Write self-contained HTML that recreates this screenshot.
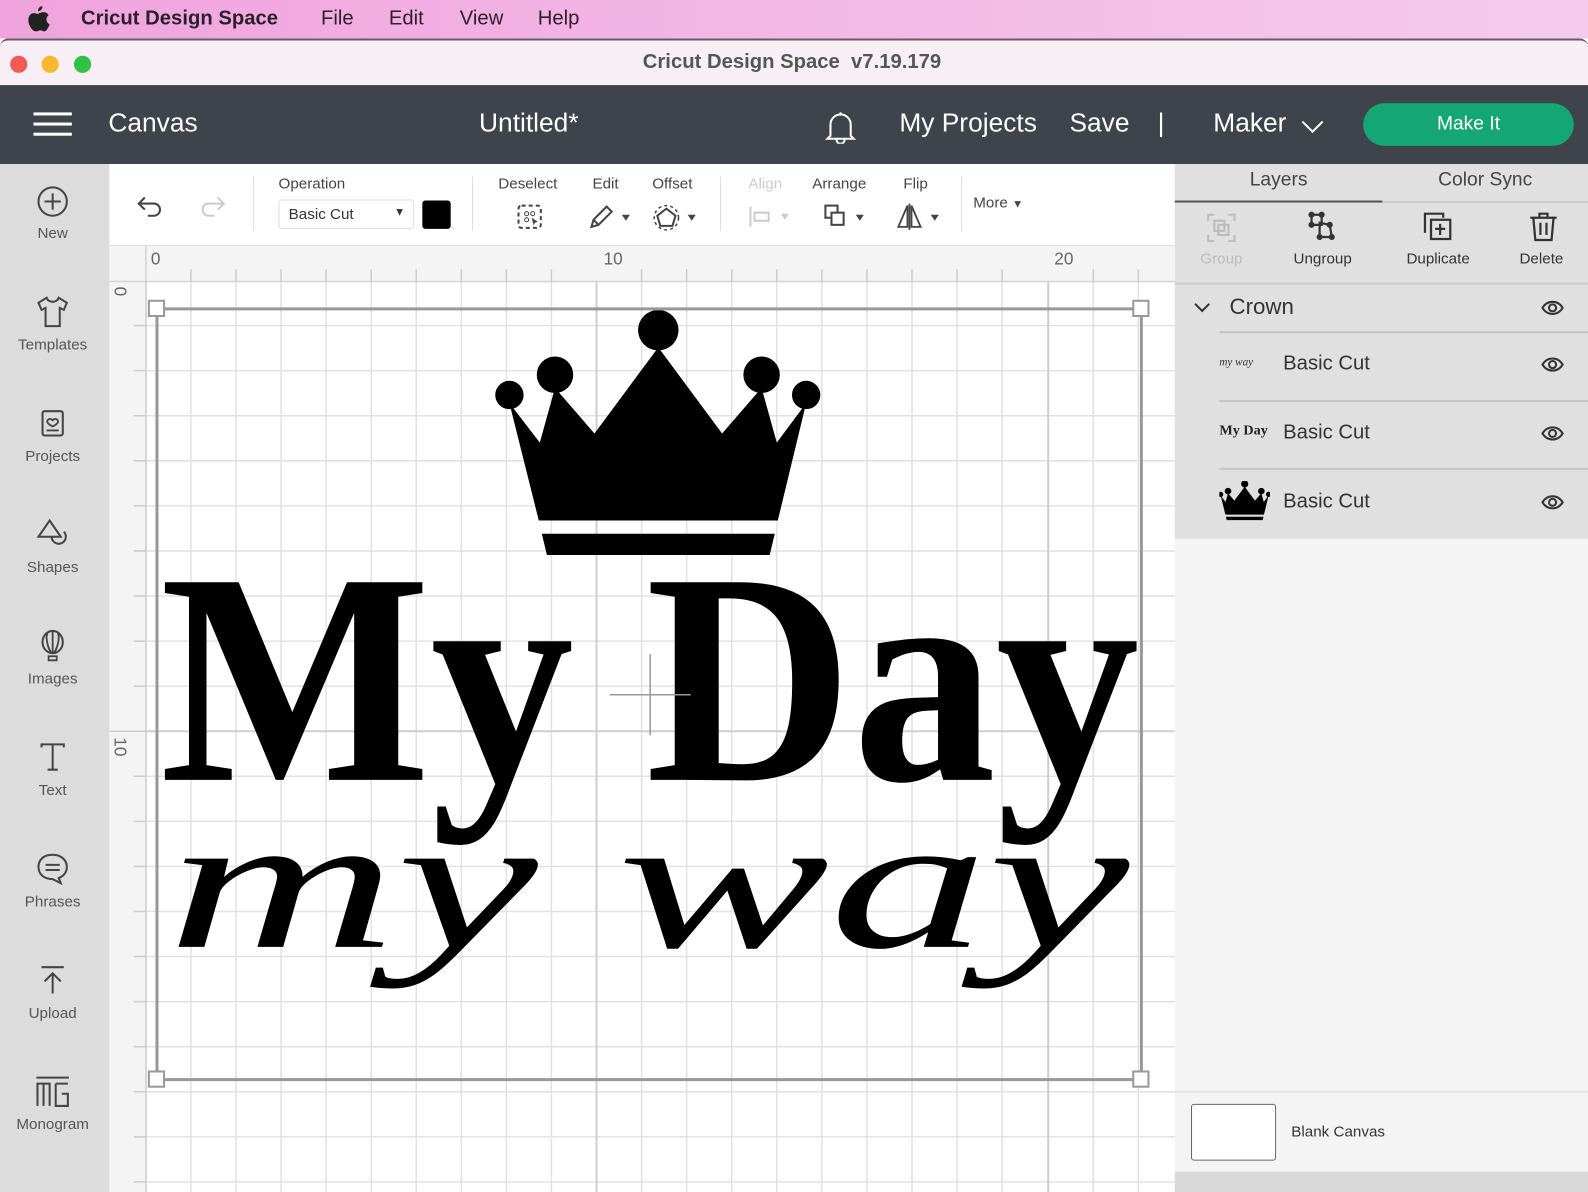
<!DOCTYPE html>
<html><head><meta charset="utf-8"><style>
*{margin:0;padding:0;box-sizing:border-box}
body{width:1588px;height:1177px;overflow:hidden;font-family:"Liberation Sans",sans-serif;background:#fff;position:relative}
#wrap{position:absolute;left:0;top:0;width:1568px;height:1163px;transform:scale(1.01276);transform-origin:0 0}
.abs{position:absolute}
.menubar{left:0;top:0;width:1568px;height:38px;background:linear-gradient(90deg,#f0a3dc,#f3b8e6 50%,#f4cbee);}
.menubar span{position:absolute;top:7px;font-size:20px;color:#2a1f2a}
.titlebar{left:0;top:38px;width:1568px;height:46px;background:#f8eef6;border-top:2px solid #6a5a68;border-radius:8px 8px 0 0}
.dot{position:absolute;top:15px;width:17px;height:17px;border-radius:50%}
.header{left:0;top:84px;width:1568px;height:78px;background:#3e434c;color:#fff}
.header span{position:absolute;font-size:26px;top:22px}
.sidebar{left:0;top:162px;width:108px;height:1015px;background:#dcdcdc}
.side{position:absolute;left:0;width:104px;text-align:center;font-size:15px;color:#555}
.side svg{display:block;margin:0 auto 6px}
.toolbar{left:108px;top:162px;width:1052px;height:80px;background:#fff}
.tl{position:absolute;font-size:15px;color:#444}
.panel{left:1160px;top:162px;width:408px;height:1015px;background:#f4f4f4}
.pl{position:absolute;font-size:15px;color:#333;text-align:center}
</style></head><body><div id="wrap">
<div class="abs menubar">
 <svg class="abs" style="left:27px;top:6px" width="22" height="26" viewBox="0 0 22 26"><path d="M15 0c0 3-2 5-4.5 5C10.5 2 12.5 0 15 0zM11 7c2 0 3-1 5-1 2 0 4 1 5 3-3 2-3 7 1 9-1 3-3 7-5 7-2 0-2-1-4-1s-3 1-4.5 1C5 25 1 19 1 14c0-5 3-7 5.5-7 2 0 3 1 4.5 1z" fill="#222"/></svg>
 <span style="left:80px;font-weight:bold">Cricut Design Space</span>
 <span style="left:317px">File</span><span style="left:384px">Edit</span><span style="left:454px">View</span><span style="left:531px">Help</span>
</div>
<div class="abs titlebar">
 <div class="dot" style="left:10px;background:#f25a55"></div>
 <div class="dot" style="left:41px;background:#f6b82e"></div>
 <div class="dot" style="left:73px;background:#2fc244"></div>
 <div class="abs" style="left:0;width:1564px;top:10px;text-align:center;font-size:20px;font-weight:bold;color:#555">Cricut Design Space&nbsp; v7.19.179</div>
</div>
<div class="abs header">
 <svg class="abs" style="left:33px;top:26px" width="38" height="26"><rect y="1" width="38" height="3" fill="#fff"/><rect y="11" width="38" height="3" fill="#fff"/><rect y="21" width="38" height="3" fill="#fff"/></svg>
 <span style="left:107px">Canvas</span>
 <span style="left:473px">Untitled*</span>
 <svg class="abs" style="left:814px;top:24px" width="32" height="34" viewBox="0 0 32 34"><path d="M16 3v2M6 26V15a10 10 0 0 1 20 0v11l3 3H3zM12 30a4 4 0 0 0 8 0" stroke="#fff" stroke-width="2" fill="none"/></svg>
 <span style="left:888px">My Projects</span>
 <span style="left:1056px">Save</span>
 <span style="left:1143px">|</span>
 <span style="left:1198px">Maker</span>
 <svg class="abs" style="left:1284px;top:34px" width="24" height="14"><path d="M2 2l10 10 10-10" stroke="#fff" stroke-width="2" fill="none"/></svg>
 <div class="abs" style="left:1346px;top:18px;width:208px;height:42px;border-radius:21px;background:#14a674;text-align:center;line-height:42px;font-size:19px">Make It</div>
</div>
<div class="abs sidebar">
 <div class="side" style="top:20px"><svg width="34" height="34"><circle cx="17" cy="17" r="14" stroke="#444" stroke-width="2" fill="none"/><path d="M17 9v16M9 17h16" stroke="#444" stroke-width="2"/></svg>New</div>
 <div class="side" style="top:128px"><svg width="34" height="36" viewBox="0 0 34 36"><path d="M11 4l-8 5 3 7 4-2v18h14V14l4 2 3-7-8-5c-1 3-4 4-6 4s-5-1-6-4z" stroke="#444" stroke-width="2" fill="none"/></svg>Templates</div>
 <div class="side" style="top:238px"><svg width="34" height="36" viewBox="0 0 34 36"><rect x="7" y="6" width="20" height="24" rx="2" stroke="#444" stroke-width="2" fill="none"/><path d="M12 15c2-3 5 0 5 0s3-3 5 0-5 6-5 6-7-3-5-6zM11 25h12" stroke="#444" stroke-width="1.8" fill="none"/></svg>Projects</div>
 <div class="side" style="top:348px"><svg width="34" height="36" viewBox="0 0 34 36"><path d="M14 4L3 20h22zM16 20a7 7 0 1 0 12-5" stroke="#444" stroke-width="2" fill="none"/></svg>Shapes</div>
 <div class="side" style="top:458px"><svg width="34" height="36" viewBox="0 0 34 36"><ellipse cx="17" cy="14" rx="10" ry="11" stroke="#444" stroke-width="2" fill="none"/><path d="M17 3v22M12 5c-3 6 2 20 5 20s8-14 5-20M13 28h8v4h-8z" stroke="#444" stroke-width="1.8" fill="none"/></svg>Images</div>
 <div class="side" style="top:568px"><svg width="34" height="36" viewBox="0 0 34 36"><path d="M6 8V5h22v3M17 5v25M12 30h10" stroke="#444" stroke-width="2" fill="none"/></svg>Text</div>
 <div class="side" style="top:678px"><svg width="34" height="36" viewBox="0 0 34 36"><path d="M17 4C8 4 3 9 3 16s5 12 14 12l8 4-2-5c5-2 8-6 8-11 0-7-6-12-14-12zM10 14h14M10 19h14" stroke="#444" stroke-width="2" fill="none"/></svg>Phrases</div>
 <div class="side" style="top:788px"><svg width="34" height="36" viewBox="0 0 34 36"><path d="M6 5h22M17 31V11M9 19l8-8 8 8" stroke="#444" stroke-width="2" fill="none"/></svg>Upload</div>
 <div class="side" style="top:898px"><svg width="40" height="36" viewBox="0 0 40 36"><path d="M4 4h32M5 32V10h6v22M11 10h6v22M23 10h12M23 10v22h12V20h-6" stroke="#444" stroke-width="2" fill="none"/></svg>Monogram</div>
</div>
<div class="abs toolbar">
 <svg class="abs" style="left:26px;top:30px" width="30" height="26"><path d="M9 3L3 9l6 6M3 9h15a6 6 0 0 1 0 12h-6" stroke="#444" stroke-width="2" fill="none"/></svg>
 <svg class="abs" style="left:86px;top:30px" width="30" height="26"><path d="M21 3l6 6-6 6M27 9H12a6 6 0 0 0 0 12h6" stroke="#ccc" stroke-width="2" fill="none"/></svg>
 <div class="abs" style="left:142px;top:12px;width:1px;height:54px;background:#ddd"></div>
 <div class="tl" style="left:167px;top:11px">Operation</div>
 <div class="abs" style="left:167px;top:35px;width:134px;height:29px;border:1px solid #ddd;border-radius:3px;font-size:15px;color:#333;padding:5px 9px">Basic Cut<span style="position:absolute;right:8px;top:6px;font-size:11px">▼</span></div>
 <div class="abs" style="left:309px;top:36px;width:28px;height:28px;background:#000;border-radius:3px"></div>
 <div class="abs" style="left:358px;top:12px;width:1px;height:54px;background:#ddd"></div>
 <div class="tl" style="left:384px;top:11px">Deselect</div>
 <svg class="abs" style="left:401px;top:38px" width="28" height="28"><rect x="3" y="3" width="22" height="22" rx="3" stroke="#444" stroke-width="2" stroke-dasharray="4 3" fill="none"/><circle cx="11" cy="11" r="2" stroke="#444" fill="none"/><circle cx="17" cy="11" r="2" stroke="#444" fill="none"/><circle cx="11" cy="17" r="2" stroke="#444" fill="none"/><path d="M16 15l6 4-3 1-1 3z" fill="#444"/></svg>
 <div class="tl" style="left:477px;top:11px">Edit</div>
 <svg class="abs" style="left:472px;top:38px" width="48" height="28"><path d="M4 24l2-7L19 4l5 5L11 22zM6 17l5 5" stroke="#444" stroke-width="2" fill="none"/><path d="M34 12h8l-4 6z" fill="#444"/></svg>
 <div class="tl" style="left:536px;top:11px">Offset</div>
 <svg class="abs" style="left:536px;top:38px" width="48" height="28"><path d="M14 6l9 7-3 10H8L5 13z" stroke="#444" stroke-width="2" fill="none"/><circle cx="14" cy="15" r="12" stroke="#444" stroke-width="1.5" stroke-dasharray="3 3" fill="none"/><path d="M35 12h8l-4 6z" fill="#444"/></svg>
 <div class="abs" style="left:603px;top:12px;width:1px;height:54px;background:#ddd"></div>
 <div class="tl" style="left:631px;top:11px;color:#ccc">Align</div>
 <svg class="abs" style="left:631px;top:40px" width="44" height="24"><path d="M2 2v20M6 8h14v8H6z" stroke="#ccc" stroke-width="2" fill="none"/><path d="M32 9h8l-4 6z" fill="#ccc"/></svg>
 <div class="tl" style="left:694px;top:11px">Arrange</div>
 <svg class="abs" style="left:704px;top:38px" width="48" height="28"><rect x="3" y="3" width="12" height="12" stroke="#444" stroke-width="2" fill="none"/><rect x="9" y="10" width="12" height="12" stroke="#444" stroke-width="2" fill="#fff"/><path d="M33 12h8l-4 6z" fill="#444"/></svg>
 <div class="tl" style="left:784px;top:11px">Flip</div>
 <svg class="abs" style="left:776px;top:38px" width="48" height="28"><path d="M12 3L3 24h9zM16 3l9 21h-9zM14 1v26" stroke="#444" stroke-width="1.8" fill="none"/><path d="M35 12h8l-4 6z" fill="#444"/></svg>
 <div class="abs" style="left:841px;top:12px;width:1px;height:54px;background:#ddd"></div>
 <div class="tl" style="left:853px;top:30px">More <span style="font-size:11px">▼</span></div>
</div>
<svg class="abs" style="left:108px;top:242px" width="1052" height="935" viewBox="108 242 1052 935">
 <rect x="108" y="242" width="1052" height="935" fill="#fff"/>
 <g stroke="#e2e2e2" stroke-width="1.5">
  <path d="M188.5 277V1177M233 277V1177M277.5 277V1177M322 277V1177M366.5 277V1177M411 277V1177M455.5 277V1177M500 277V1177M544.5 277V1177M633.5 277V1177M678 277V1177M722.5 277V1177M767 277V1177M811.5 277V1177M856 277V1177M900.5 277V1177M945 277V1177M989.5 277V1177M1079.5 277V1177M1124 277V1177"/>
  <path d="M108 321.5H1160M108 366H1160M108 410.5H1160M108 455H1160M108 499.5H1160M108 544H1160M108 588.5H1160M108 633H1160M108 677.5H1160M108 766.5H1160M108 811H1160M108 855.5H1160M108 900H1160M108 944.5H1160M108 989H1160M108 1033.5H1160M108 1078H1160M108 1122.5H1160M108 1167H1160"/>
 </g>
 <g stroke="#cfcfcf" stroke-width="2"><path d="M144 242V1177M589 242V1177M1035 242V1177M108 722H1160"/></g>
 <rect x="108" y="242" width="1052" height="35" fill="#f4f4f4"/>
 <rect x="108" y="242" width="36" height="935" fill="#f4f4f4"/>
 <path d="M108 242H1160M108 278H1160M144 242V1177" stroke="#d4d4d4" stroke-width="1.5"/>
 <g stroke="#ccc" stroke-width="1.5"><path d="M188.5 266V278M233 266V278M277.5 266V278M322 266V278M366.5 266V278M411 266V278M455.5 266V278M500 266V278M544.5 266V278M633.5 266V278M678 266V278M722.5 266V278M767 266V278M811.5 266V278M856 266V278M900.5 266V278M945 266V278M989.5 266V278M1079.5 266V278M1124 266V278"/>
 <path d="M132 321.5H144M132 366H144M132 410.5H144M132 455H144M132 499.5H144M132 544H144M132 588.5H144M132 633H144M132 677.5H144M132 766.5H144M132 811H144M132 855.5H144M132 900H144M132 944.5H144M132 989H144M132 1033.5H144M132 1078H144M132 1122.5H144M132 1167H144M108 722H144"/></g>
 <g font-family="Liberation Sans,sans-serif" font-size="17" fill="#666"><text x="149" y="261">0</text><text x="596" y="261">10</text><text x="1041" y="261">20</text>
 <text transform="translate(113,283) rotate(90)">0</text><text transform="translate(113,728) rotate(90)">10</text></g>
 <g fill="#000">
  <circle cx="503" cy="390" r="14"/><circle cx="548" cy="370" r="18"/><circle cx="650" cy="326" r="20"/><circle cx="752" cy="370" r="18"/><circle cx="796" cy="390" r="14"/>
  <polygon points="503,398 533,437 548,383 587,428 650,343 713,428 752,383 767,437 796,398 768,514 532,514"/>
  <polygon points="535,527 765,527 760,548 540,548"/>
 </g>
 <text x="158" y="770" font-family="Liberation Serif,serif" font-weight="bold" font-size="298" textLength="967" lengthAdjust="spacingAndGlyphs">My Day</text>
 <text x="165" y="935" font-family="Liberation Serif,serif" font-style="italic" font-size="190" textLength="950" lengthAdjust="spacingAndGlyphs">my way</text>
 <path d="M602 686H682M642 646V726" stroke="#999" stroke-width="1.5"/>
 <rect x="155" y="305" width="972" height="761" fill="none" stroke="#999" stroke-width="3"/>
 <g fill="#fff" stroke="#999" stroke-width="2"><rect x="147" y="297" width="15" height="15"/><rect x="1119" y="297" width="15" height="15"/><rect x="147" y="1058" width="15" height="15"/><rect x="1119" y="1058" width="15" height="15"/></g>
</svg>
<div class="abs panel">
 <div class="abs" style="left:0;top:0;width:408px;height:370px;background:#e0e0e0"></div>
 <div class="pl" style="left:0;top:5px;width:205px;font-size:19px;color:#444">Layers</div>
 <div class="pl" style="left:205px;top:5px;width:203px;font-size:19px;color:#444">Color Sync</div>
 <div class="abs" style="left:0;top:36px;width:205px;height:2px;background:#555"></div>
 <div class="abs" style="left:205px;top:37px;width:203px;height:1px;background:#bbb"></div>
 <svg class="abs" style="left:30px;top:47px" width="32" height="32"><path d="M3 9V3h6M23 3h6v6M29 23v6h-6M9 29H3v-6" stroke="#bbb" stroke-width="2" fill="none"/><rect x="9" y="9" width="10" height="10" stroke="#bbb" stroke-width="2" fill="none"/><rect x="13" y="13" width="10" height="10" stroke="#bbb" stroke-width="2" fill="none"/></svg>
 <svg class="abs" style="left:128px;top:45px" width="34" height="34"><path d="M7 5h10v10H7zM15 13l10 2 2 12-12 0z" stroke="#333" stroke-width="2.2" fill="none"/><g fill="#333"><circle cx="7" cy="5" r="3"/><circle cx="17" cy="5" r="3"/><circle cx="7" cy="15" r="3"/><circle cx="25" cy="15" r="3"/><circle cx="27" cy="27" r="3"/><circle cx="15" cy="27" r="3"/></g></svg>
 <svg class="abs" style="left:244px;top:46px" width="32" height="32"><path d="M3 22V3h18v4" stroke="#333" stroke-width="2.2" fill="none"/><rect x="9" y="9" width="19" height="19" stroke="#333" stroke-width="2.2" fill="none"/><path d="M18 13v11M13 18h10" stroke="#333" stroke-width="2.2"/></svg>
 <svg class="abs" style="left:348px;top:46px" width="32" height="32"><path d="M3 7h26M12 7V3h8v4M6 7l2 22h16l2-22M13 12v12M19 12v12" stroke="#333" stroke-width="2.2" fill="none"/></svg>
 <div class="pl" style="left:0;top:85px;width:92px;color:#bbb">Group</div>
 <div class="pl" style="left:100px;top:85px;width:92px">Ungroup</div>
 <div class="pl" style="left:214px;top:85px;width:92px">Duplicate</div>
 <div class="pl" style="left:316px;top:85px;width:92px">Delete</div>
 <div class="abs" style="left:0;top:117px;width:408px;height:2px;background:#ccc"></div>
 <svg class="abs" style="left:18px;top:136px" width="18" height="12"><path d="M2 2l7 7 7-7" stroke="#333" stroke-width="2" fill="none"/></svg>
 <div class="abs" style="left:54px;top:128px;font-size:22px;color:#333">Crown</div>
 <div class="abs" style="left:44px;top:165px;width:364px;height:2px;background:#c4c4c4"></div>
 <div class="abs" style="left:44px;top:233px;width:364px;height:2px;background:#c4c4c4"></div>
 <div class="abs" style="left:44px;top:300px;width:364px;height:2px;background:#c4c4c4"></div>
 <div class="abs" style="left:44px;top:190px;font-family:'Liberation Serif',serif;font-style:italic;font-size:11px;color:#333">my way</div>
 <div class="abs" style="left:44px;top:256px;font-family:'Liberation Serif',serif;font-weight:bold;font-size:14px;color:#222">My Day</div>
 <svg class="abs" style="left:44px;top:313px" width="50" height="40" viewBox="495 310 310 245"><g fill="#000"><circle cx="503" cy="390" r="16"/><circle cx="548" cy="370" r="20"/><circle cx="650" cy="326" r="22"/><circle cx="752" cy="370" r="20"/><circle cx="796" cy="390" r="16"/><polygon points="503,398 533,437 548,383 587,428 650,343 713,428 752,383 767,437 796,398 768,514 532,514"/><polygon points="535,527 765,527 760,548 540,548"/></g></svg>
 <div class="abs" style="left:107px;top:186px;font-size:20px;color:#333">Basic Cut</div>
 <div class="abs" style="left:107px;top:254px;font-size:20px;color:#333">Basic Cut</div>
 <div class="abs" style="left:107px;top:322px;font-size:20px;color:#333">Basic Cut</div>
 <svg class="abs" style="left:361px;top:133px" width="24" height="18"><path d="M2 9c5-8 15-8 20 0-5 8-15 8-20 0z" stroke="#333" stroke-width="2" fill="none"/><circle cx="12" cy="9" r="3.5" stroke="#333" stroke-width="2" fill="none"/></svg>
 <svg class="abs" style="left:361px;top:189px" width="24" height="18"><path d="M2 9c5-8 15-8 20 0-5 8-15 8-20 0z" stroke="#333" stroke-width="2" fill="none"/><circle cx="12" cy="9" r="3.5" stroke="#333" stroke-width="2" fill="none"/></svg>
 <svg class="abs" style="left:361px;top:257px" width="24" height="18"><path d="M2 9c5-8 15-8 20 0-5 8-15 8-20 0z" stroke="#333" stroke-width="2" fill="none"/><circle cx="12" cy="9" r="3.5" stroke="#333" stroke-width="2" fill="none"/></svg>
 <svg class="abs" style="left:361px;top:325px" width="24" height="18"><path d="M2 9c5-8 15-8 20 0-5 8-15 8-20 0z" stroke="#333" stroke-width="2" fill="none"/><circle cx="12" cy="9" r="3.5" stroke="#333" stroke-width="2" fill="none"/></svg>
 <div class="abs" style="left:0;top:915px;width:408px;height:2px;background:#e6e6e6"></div>
 <div class="abs" style="left:16px;top:928px;width:84px;height:56px;background:#fff;border:1.5px solid #666;border-radius:3px"></div>
 <div class="abs" style="left:115px;top:947px;font-size:15px;color:#333">Blank Canvas</div>
 <div class="abs" style="left:0;top:995px;width:408px;height:20px;background:#d9d9d9"></div>
</div>
</div></body></html>
